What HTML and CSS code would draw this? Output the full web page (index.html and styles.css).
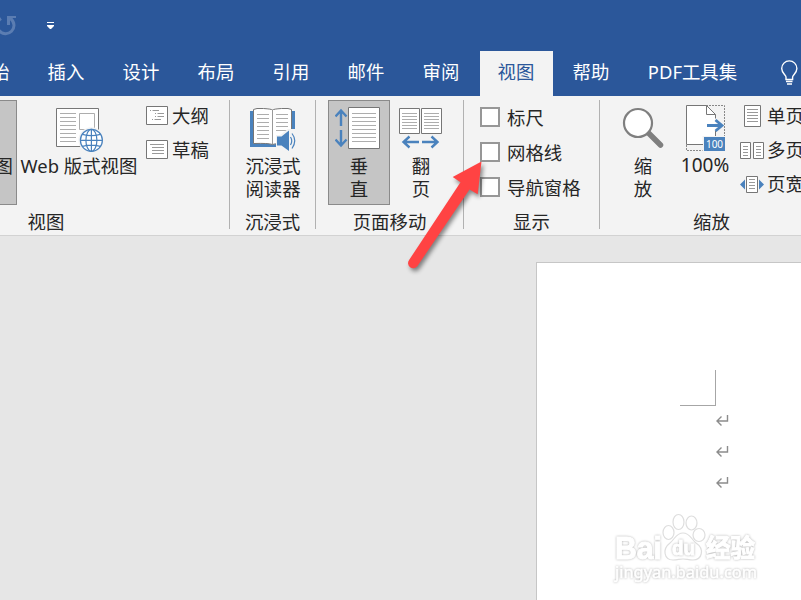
FILE: index.html
```html
<!DOCTYPE html>
<html lang="zh-CN">
<head>
    <meta charset="UTF-8">
    <meta name="viewport" content="width=device-width, initial-scale=1.0">
    <title>视图</title>
    <link rel="stylesheet" href="styles.css">
</head>
<body>
    <header class="titlebar">
        <svg class="redo" width="18" height="22" viewBox="0 14 18 22">
            <path d="M1 18.500A8.300 8.300 0 1 0 11 19" fill="none" stroke="#5b7db2" stroke-width="3"/>
            <path d="M7 16h9v2h-3l-3 2.500V25H7z" fill="#5b7db2"/>
        </svg>
        <svg class="customize" width="8" height="8" viewBox="0 0 8 8">
            <path d="M0 0h7v1H0zM0 3h7v1L4 7H3L0 4z" fill="#fff"/>
        </svg>
    </header>

    <nav class="tabs">
        <a class="tab">开始</a>
        <a class="tab">插入</a>
        <a class="tab">设计</a>
        <a class="tab">布局</a>
        <a class="tab">引用</a>
        <a class="tab">邮件</a>
        <a class="tab">审阅</a>
        <a class="tab active">视图</a>
        <a class="tab">帮助</a>
        <a class="tab wide">PDF工具集</a>
        <svg class="bulb" width="20" height="26" viewBox="780 60 20 26">
            <path d="M786 79.500v-2.500c0-2-4.300-4-4.300-8.500a7.500 7.500 0 0 1 15.200 0c0 4.500-4.300 6.500-4.300 8.500v2.500zM786 81.500h6.500M787 84h5" fill="none" stroke="#fff" stroke-width="1.400"/>
        </svg>
    </nav>

    <section class="ribbon">
        <div class="group group-views">
            <div class="group-body">
                <button class="big selected print-layout"><span class="icon-space"></span><span>页面视图</span></button>
                <button class="big web-layout">
                    <svg width="48" height="48" viewBox="55 105 48 48">
                        <path d="M56.500 108.500h42v38h-42z" fill="#fff" stroke="#767676"/>
                        <path d="M60 113.500h16M60 117.500h16M60 121.500h16M60 125.500h16M60 129.500h16M60 133.500h16M60 137.500h16M60 141.500h16M79.500 113.500h15v16h-15z" fill="none" stroke="#adadad"/>
                        <circle cx="91.400" cy="140.300" r="13" fill="#f3f3f3"/>
                        <g fill="#fff" stroke="#4a82bd" stroke-width="1.200">
                            <circle cx="91.400" cy="140.300" r="11"/>
                            <ellipse cx="91.400" cy="140.300" rx="5.500" ry="11"/>
                            <path d="M91.400 129.300v22M80.400 140.300h22M82.500 134.300q8.900 2.500 17.800 0M82.500 146.300q8.900-2.500 17.800 0" fill="none"/>
                        </g>
                    </svg>
                    <span>Web 版式视图</span>
                </button>
                <div class="stack">
                    <button class="small">
                        <svg width="22" height="20" viewBox="146 106 22 20">
                            <path d="M146.500 106.500h21v18h-21z" fill="#fff" stroke="#767676"/>
                            <path d="M150 110.500h1M152.500 110.500h6.500M155 113.500h1M157.500 113.500h6.500M155 116.500h1M157.500 116.500h6.500M152 119.500h1M154.500 119.500h6.500" stroke="#999"/>
                        </svg>
                        <span>大纲</span>
                    </button>
                    <button class="small">
                        <svg width="22" height="20" viewBox="146 140 22 20">
                            <path d="M146.500 140.500h21v18h-21z" fill="#fff" stroke="#767676"/>
                            <path d="M150 144.500h14M152 147.500h12M152 150.500h12M152 153.500h12" stroke="#999"/>
                        </svg>
                        <span>草稿</span>
                    </button>
                </div>
            </div>
            <div class="group-label">视图</div>
        </div>

        <div class="group group-immersive">
            <div class="group-body">
                <button class="big reader">
                    <svg width="48" height="48" viewBox="249 105 48 48">
                        <path d="M250 111h45v36h-45z" fill="#4a82bd"/>
                        <path d="M253.500 109.500q2-1.500 10-1t9 1.500q1-1 9-1.500t10 1v34q-15-.5-19 1-4-1.500-19-1z" fill="#fff" stroke="#767676"/>
                        <path d="M272.500 110v34" stroke="#999"/>
                        <path d="M257 114.500h12M257 118.500h12M257 122.500h12M257 126.500h12M257 130.500h12M257 134.500h12M257 138.500h12M276 114.500h12M276 118.500h12M276 122.500h12M276 126.500h12M276 130.500h12" stroke="#adadad"/>
                        <path d="M276 135h4l8-6h9v24h-8l-9-6h-4z" fill="#f3f3f3"/>
                        <path d="M277 136.500h4.500l7.500-6V151l-7.500-5.500H277z" fill="#4a82bd"/>
                        <path d="M290.500 137q2.500 4 0 8M292 133.500q5.500 7 0 15" fill="none" stroke="#4a82bd" stroke-width="1.200"/>
                    </svg>
                    <span>沉浸式<br>阅读器</span>
                </button>
            </div>
            <div class="group-label">沉浸式</div>
        </div>

        <div class="group group-movement">
            <div class="group-body">
                <button class="big selected">
                    <svg width="48" height="48" viewBox="335 105 48 48">
                        <path d="M348.500 107.500h31v41h-31z" fill="#fff" stroke="#767676"/>
                        <path d="M352 113.500h24M352 117.500h24M352 121.500h24M352 125.500h24M352 129.500h24M352 133.500h24M352 137.500h24M352 141.500h24" stroke="#adadad"/>
                        <path d="M341 126v-15M335.500 116.500l5.500-6 5.500 6M341 130v15M335.500 139.500l5.500 6 5.500-6" fill="none" stroke="#4a82bd" stroke-width="2.400"/>
                    </svg>
                    <span>垂<br>直</span>
                </button>
                <button class="big">
                    <svg width="48" height="48" viewBox="397 105 48 48">
                        <path d="M399.500 108.500h20v25h-20zM421.500 108.500h20v25h-20z" fill="#fff" stroke="#767676"/>
                        <path d="M402 113.500h15M402 116.500h15M402 119.500h15M402 122.500h15M402 125.500h15M402 128.500h15M424 113.500h15M424 116.500h15M424 119.500h15M424 122.500h15M424 125.500h15M424 128.500h15" stroke="#adadad"/>
                        <path d="M419 142h-15M409.500 136.500l-6 5.500 6 5.500M422 142h15M431.500 136.500l6 5.500-6 5.500" fill="none" stroke="#4a82bd" stroke-width="2.400"/>
                    </svg>
                    <span>翻<br>页</span>
                </button>
            </div>
            <div class="group-label">页面移动</div>
        </div>

        <div class="group group-show">
            <div class="group-body checks">
                <label class="check"><span class="box"></span>标尺</label>
                <label class="check"><span class="box"></span>网格线</label>
                <label class="check"><span class="box"></span>导航窗格</label>
            </div>
            <div class="group-label">显示</div>
        </div>

        <div class="group group-zoom">
            <div class="group-body">
                <button class="big">
                    <svg width="48" height="48" viewBox="619 105 48 48">
                        <path d="M648 132.500l12.500 12.500" stroke="#7f7f7f" stroke-width="5.500" stroke-linecap="round"/>
                        <circle cx="638" cy="123" r="14" fill="#fff" stroke="#7f7f7f" stroke-width="2.200"/>
                    </svg>
                    <span>缩<br>放</span>
                </button>
                <button class="big">
                    <svg width="48" height="48" viewBox="681 105 48 48">
                        <path d="M686.500 145v5.500h16M706 105.500h18.500V136" fill="none" stroke="#888" stroke-dasharray="2 1"/>
                        <path d="M686.500 105.500h20l9 9V136h-13v9h-16z" fill="#fff"/>
                        <path d="M703 144.500h-16.500v-39h20l9 9v4M715.500 131v5M706.500 105.500v9h9" fill="none" stroke="#767676"/>
                        <path d="M707 125.500h15M715.500 120l6.500 5.500-6.500 5.500" fill="none" stroke="#4a82bd" stroke-width="2.800"/>
                        <path d="M704 137h21v14h-21z" fill="#4a82bd"/>
                        <text class="badge-text" x="714.500" y="148" text-anchor="middle">100</text>
                    </svg>
                    <span class="percent">100%</span>
                </button>
                <div class="stack">
                    <button class="small">
                        <svg width="24" height="24" viewBox="740 104 24 24">
                            <path d="M744.500 105.500h16v21h-16z" fill="#fff" stroke="#767676"/>
                            <path d="M747 109.500h11M747 112.500h11M747 115.500h11M747 118.500h11M747 121.500h11" stroke="#999"/>
                        </svg>
                        <span>单页</span>
                    </button>
                    <button class="small">
                        <svg width="24" height="24" viewBox="740 138 24 24">
                            <path d="M740.500 142.500h10v16h-10zM753.500 142.500h10v16h-10z" fill="#fff" stroke="#767676"/>
                            <path d="M743 146.500h5M743 149.500h5M743 152.500h5M743 155.500h5M756 146.500h5M756 149.500h5M756 152.500h5M756 155.500h5" stroke="#999"/>
                        </svg>
                        <span>多页</span>
                    </button>
                    <button class="small">
                        <svg width="24" height="24" viewBox="740 172 24 24">
                            <path d="M746.500 176.500h11v16h-11z" fill="#fff" stroke="#767676"/>
                            <path d="M749 179.500h6M749 182.500h6M749 185.500h6M749 188.500h6" stroke="#999"/>
                            <path d="M740 184.500l5-5v10zM764 184.500l-5-5v10z" fill="#4a82bd"/>
                        </svg>
                        <span>页宽</span>
                    </button>
                </div>
            </div>
            <div class="group-label">缩放</div>
        </div>
    </section>

    <main class="workspace">
        <article class="page">
            <div class="margin-corner"></div>
            <div class="marks">
                <svg class="mark" width="13" height="31" viewBox="0 0 13 31"><path d="M11.500 9v6H1.500M5.500 10.500L1 15l4.500 4.500" fill="none" stroke="#8c8c8c" stroke-width="1.400"/></svg>
                <svg class="mark" width="13" height="31" viewBox="0 0 13 31"><path d="M11.500 9v6H1.500M5.500 10.500L1 15l4.500 4.500" fill="none" stroke="#8c8c8c" stroke-width="1.400"/></svg>
                <svg class="mark" width="13" height="31" viewBox="0 0 13 31"><path d="M11.500 9v6H1.500M5.500 10.500L1 15l4.500 4.500" fill="none" stroke="#8c8c8c" stroke-width="1.400"/></svg>
            </div>
        </article>
    </main>

    <svg class="watermark" width="160" height="76" viewBox="605 510 160 76">
        <g fill="#fff" stroke="#dedede" stroke-width="1.200">
            <ellipse cx="668.500" cy="532.500" rx="5.500" ry="7"/>
            <ellipse cx="678.500" cy="522" rx="5.500" ry="7.500"/>
            <ellipse cx="691.500" cy="523" rx="5.500" ry="7"/>
            <ellipse cx="699" cy="535" rx="6" ry="6.500"/>
            <path d="M683 533c7 0 8 6 13 10 9 6 6 17-3 17-5 0-6-1-10-1s-5 1-10 1c-9 0-11-11-3-17 5-4 6-10 13-10z"/>
        </g>
        <g class="outlined">
            <text class="brand" x="615" y="559" textLength="47" lengthAdjust="spacingAndGlyphs">Bai</text>
            <text class="brand du" x="672" y="555" textLength="23" lengthAdjust="spacingAndGlyphs">du</text>
            <text class="brand cn" x="706" y="557" textLength="49" lengthAdjust="spacingAndGlyphs">经验</text>
            <text class="site" x="615" y="578" textLength="142" lengthAdjust="spacingAndGlyphs">jingyan.baidu.com</text>
        </g>
    </svg>

    <svg class="pointer" width="90" height="124" viewBox="400 155 90 124">
        <path d="M481.500 161.500L452.700 177l7.800 5.300-51.400 77.700a5 5 0 0 0 8.200 6.200l52.200-76.700 8.200 4.800z" fill="#ff4343"/>
    </svg>
</body>
</html>
```

FILE: styles.css
```css
* {
    box-sizing: border-box;
}
body {
    margin: 0;
    width: 801px;
    height: 600px;
    overflow: hidden;
    position: relative;
    display: flex;
    flex-direction: column;
    background-color: #e6e6e6;
    color: #262626;
    font-family: "Noto Sans", "Noto Sans CJK SC", sans-serif;
    font-size: 18.4px;
}
svg {
    display: block;
    flex: none;
}
.titlebar {
    flex: none;
    height: 51px;
    padding-top: 14px;
    display: flex;
    background-color: #2b579a;
}
.customize {
    margin: 8px 0 0 29px;
}
.tabs {
    flex: none;
    height: 45px;
    display: flex;
    gap: 2px;
    background-color: #2b579a;
}
.tab {
    flex: none;
    width: 73px;
    padding-right: 1px;
    line-height: 41px;
    text-align: center;
    color: #fff;
    white-space: nowrap;
}
.tab:first-child {
    margin-left: -45px;
}
.tab.active {
    background-color: #f3f3f3;
    color: #2b579a;
}
.tab.wide {
    width: 126px;
}
.bulb {
    margin: 9px 0 0 22px;
}
.ribbon {
    flex: none;
    height: 140px;
    padding-top: 4px;
    display: flex;
    background-color: #f3f3f3;
    border-bottom: 1px solid #d2d2d2;
}
.group {
    flex: none;
    height: 129px;
    display: flex;
    flex-direction: column;
    border-right: 1px solid #b1b1b1;
}
.group-views {
    width: 367px;
    margin-left: -137px;
}
.group-immersive {
    width: 86px;
}
.group-movement {
    width: 148px;
}
.group-show {
    width: 136px;
}
.group-zoom {
    width: 224px;
}
.group-body {
    height: 106px;
    flex: none;
    display: flex;
}
.group-label {
    line-height: 32px;
    text-align: center;
}
button {
    padding: 0;
    border: 1px solid transparent;
    background: none;
    color: inherit;
    font: inherit;
    white-space: nowrap;
}
.big {
    flex: none;
    width: 62px;
    height: 105px;
    padding-top: 4px;
    display: flex;
    flex-direction: column;
    align-items: center;
    line-height: 23px;
}
.big svg {
    margin-bottom: 1px;
}
.icon-space {
    height: 49px;
}
.percent {
    font-size: 19px;
}
.selected {
    background-color: #c5c5c5;
    border-color: #8a8a8a;
}
.print-layout {
    width: 82px;
    margin-left: 72px;
}
.web-layout {
    width: 124px;
}
.reader {
    width: 86px;
}
.group-movement .group-body,
.group-zoom .group-body {
    padding-left: 12px;
}
.stack {
    display: flex;
    flex-direction: column;
    padding-left: 4px;
}
.small {
    height: 34px;
    padding-bottom: 2px;
    display: flex;
    align-items: center;
    gap: 4px;
    line-height: 24px;
}
.group-zoom .stack {
    padding-left: 3px;
}
.group-zoom .small {
    gap: 3px;
}
.checks {
    flex-direction: column;
    padding-left: 16px;
}
.check {
    height: 35px;
    padding-bottom: 2px;
    display: flex;
    align-items: center;
    gap: 7px;
}
.box {
    width: 20px;
    height: 20px;
    border: 2px solid #979797;
    background-color: #fff;
}
.badge-text {
    fill: #fff;
    font-size: 10px;
}
.workspace {
    flex: 1;
    padding: 26px 0 0 536px;
    display: flex;
}
.page {
    flex: 1;
    padding: 107px 0 0 143px;
    background-color: #fff;
    border: 1px solid #c6c6c6;
    border-width: 1px 0 0 1px;
}
.margin-corner {
    width: 36px;
    height: 36px;
    border: 1px solid #a6a6a6;
    border-width: 0 1px 1px 0;
}
.marks {
    padding-left: 36px;
}
.watermark {
    position: absolute;
    left: 605px;
    top: 510px;
}
.outlined {
    fill: #fff;
    stroke: #fff;
    stroke-width: 1px;
    filter: drop-shadow(0 0 1px rgba(0, 0, 0, 0.3));
}
.brand {
    font-family: "Liberation Sans", "Noto Sans CJK SC", sans-serif;
    font-size: 31px;
    font-weight: bold;
}
.brand.du {
    font-size: 21px;
}
.brand.cn {
    font-size: 25px;
}
.site {
    font-size: 16px;
    stroke-width: 0.5px;
}
.pointer {
    position: absolute;
    left: 400px;
    top: 155px;
    overflow: visible;
    filter: drop-shadow(2px 3px 2px rgba(0, 0, 0, 0.45));
}
```
